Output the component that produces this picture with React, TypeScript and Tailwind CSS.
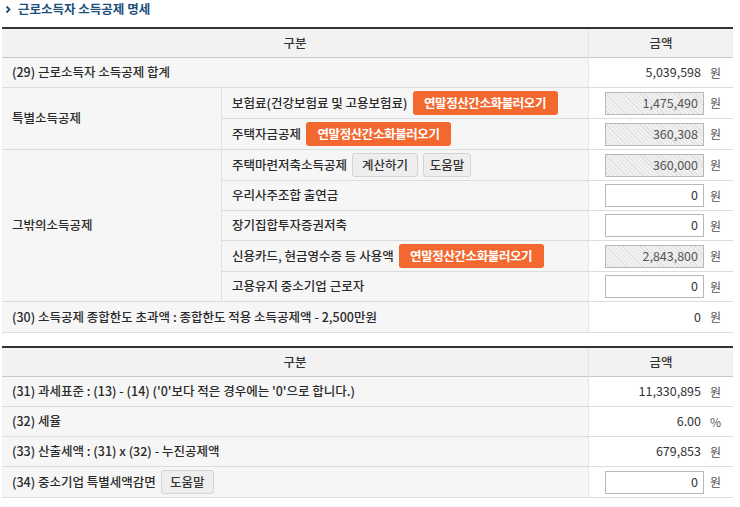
import React from "react";

const font = { fontFamily: '"Noto Sans CJK KR", "Noto Sans", sans-serif' };

function Unit({ u = "원" }: { u?: string }) {
  return <span className="w-[12px] text-[12px] text-[#555] ml-[6px] text-left">{u}</span>;
}

function Static({ v, u = "원" }: { v: string; u?: string }) {
  return (
    <div className="flex items-center justify-end h-full pr-[11px] bg-white border-b border-[#dcdcdc] border-l border-l-[#e6e6e6]">
      <span className="pr-[3px] text-[12.5px] text-[#333]">{v}</span>
      <Unit u={u} />
    </div>
  );
}

function Input({ v, ro = false }: { v: string; ro?: boolean }) {
  return (
    <div className="flex items-center justify-end h-full pr-[11px] bg-white border-b border-[#dcdcdc] border-l border-l-[#e6e6e6]">
      <div
        className={
          "w-[99px] h-[23px] border border-[#b8b8b8] flex items-center justify-end pr-[5px] text-[12.5px] " +
          (ro
            ? "text-[#555] bg-[repeating-linear-gradient(45deg,#f1f1f1_0px,#f1f1f1_2px,#e1e1e1_2px,#e1e1e1_3px)]"
            : "text-[#333] bg-white")
        }
      >
        {v}
      </div>
      <Unit />
    </div>
  );
}

function Orange() {
  return (
    <span className="inline-flex items-center justify-center w-[145px] h-[24px] rounded-[3px] bg-[#f3682f] text-white text-[12.5px] font-bold ml-[5px] tracking-[-0.4px]">
      연말정산간소화불러오기
    </span>
  );
}

function Gray({ t, w }: { t: string; w: string }) {
  return (
    <span
      className={
        "inline-flex items-center justify-center h-[24px] rounded-[3px] bg-[#eeeeee] border border-[#d4d4d4] text-[#333] text-[12.5px] " +
        w
      }
    >
      {t}
    </span>
  );
}

const lbl = "flex items-center h-full bg-[#f6f6f6] border-b border-[#dcdcdc] text-[12.5px] font-medium text-[#2a2a2a]";

export default function App() {
  return (
    <div style={font} className="w-[740px] h-[507px] bg-white text-[#333] leading-none">
      <div className="h-[27px] flex items-start pt-[2px] pl-[5px]">
        <svg width="6" height="14" viewBox="0 0 6 14" className="mr-[7px]">
          <path d="M1.5 4.5 L4.5 7.5 L1.5 10.5" fill="none" stroke="#1d4f7c" strokeWidth="1.8" />
        </svg>
        <span className="text-[#1d4f7c] text-[12.5px] font-bold leading-[14px]">근로소득자 소득공제 명세</span>
      </div>

      <div className="ml-[2px] w-[731px] border-t-2 border-[#333] grid grid-cols-[220px_366px_145px] grid-rows-[29px_30px_31px_31px_31px_30px_30px_31px_30px_31px]">
        <div className="col-span-2 flex items-center justify-center bg-[#f2f2f2] border-b border-[#c8c8c8] text-[12.5px] font-medium">구분</div>
        <div className="flex items-center justify-center bg-[#f2f2f2] border-b border-[#c8c8c8] border-l border-l-[#e6e6e6] text-[12.5px] font-medium">금액</div>

        <div className={"col-span-2 pl-[10px] " + lbl}>(29) 근로소득자 소득공제 합계</div>
        <Static v="5,039,598" />

        <div className={"row-span-2 pl-[10px] border-r border-r-[#e2e2e2] " + lbl}>특별소득공제</div>
        <div className={"pl-[10px] " + lbl}>
          보험료(건강보험료 및 고용보험료)
          <Orange />
        </div>
        <Input v="1,475,490" ro />
        <div className={"pl-[10px] " + lbl}>
          주택자금공제
          <Orange />
        </div>
        <Input v="360,308" ro />

        <div className={"row-span-5 pl-[10px] border-r border-r-[#e2e2e2] " + lbl}>그밖의소득공제</div>
        <div className={"pl-[10px] " + lbl}>
          주택마련저축소득공제
          <span className="ml-[5px] flex gap-[5px]">
            <Gray t="계산하기" w="w-[66px]" />
            <Gray t="도움말" w="w-[48px]" />
          </span>
        </div>
        <Input v="360,000" ro />
        <div className={"pl-[10px] " + lbl}>우리사주조합 출연금</div>
        <Input v="0" />
        <div className={"pl-[10px] " + lbl}>장기집합투자증권저축</div>
        <Input v="0" />
        <div className={"pl-[10px] " + lbl}>
          신용카드, 현금영수증 등 사용액
          <Orange />
        </div>
        <Input v="2,843,800" ro />
        <div className={"pl-[10px] " + lbl}>고용유지 중소기업 근로자</div>
        <Input v="0" />

        <div className={"col-span-2 pl-[10px] " + lbl}>(30) 소득공제 종합한도 초과액 : 종합한도 적용 소득공제액 - 2,500만원</div>
        <Static v="0" />
      </div>

      <div className="ml-[2px] mt-[13px] w-[731px] border-t-2 border-[#333] grid grid-cols-[586px_145px] grid-rows-[29px_30px_30px_30px_31px]">
        <div className="flex items-center justify-center bg-[#f2f2f2] border-b border-[#c8c8c8] text-[12.5px] font-medium">구분</div>
        <div className="flex items-center justify-center bg-[#f2f2f2] border-b border-[#c8c8c8] border-l border-l-[#e6e6e6] text-[12.5px] font-medium">금액</div>

        <div className={"pl-[10px] " + lbl}>(31) 과세표준 : (13) - (14) ('0'보다 적은 경우에는 '0'으로 합니다.)</div>
        <Static v="11,330,895" />
        <div className={"pl-[10px] " + lbl}>(32) 세율</div>
        <Static v="6.00" u="%" />
        <div className={"pl-[10px] " + lbl}>(33) 산출세액 : (31) x (32) - 누진공제액</div>
        <Static v="679,853" />
        <div className={"pl-[10px] " + lbl}>
          (34) 중소기업 특별세액감면
          <span className="ml-[5px]">
            <Gray t="도움말" w="w-[53px]" />
          </span>
        </div>
        <Input v="0" />
      </div>
    </div>
  );
}
